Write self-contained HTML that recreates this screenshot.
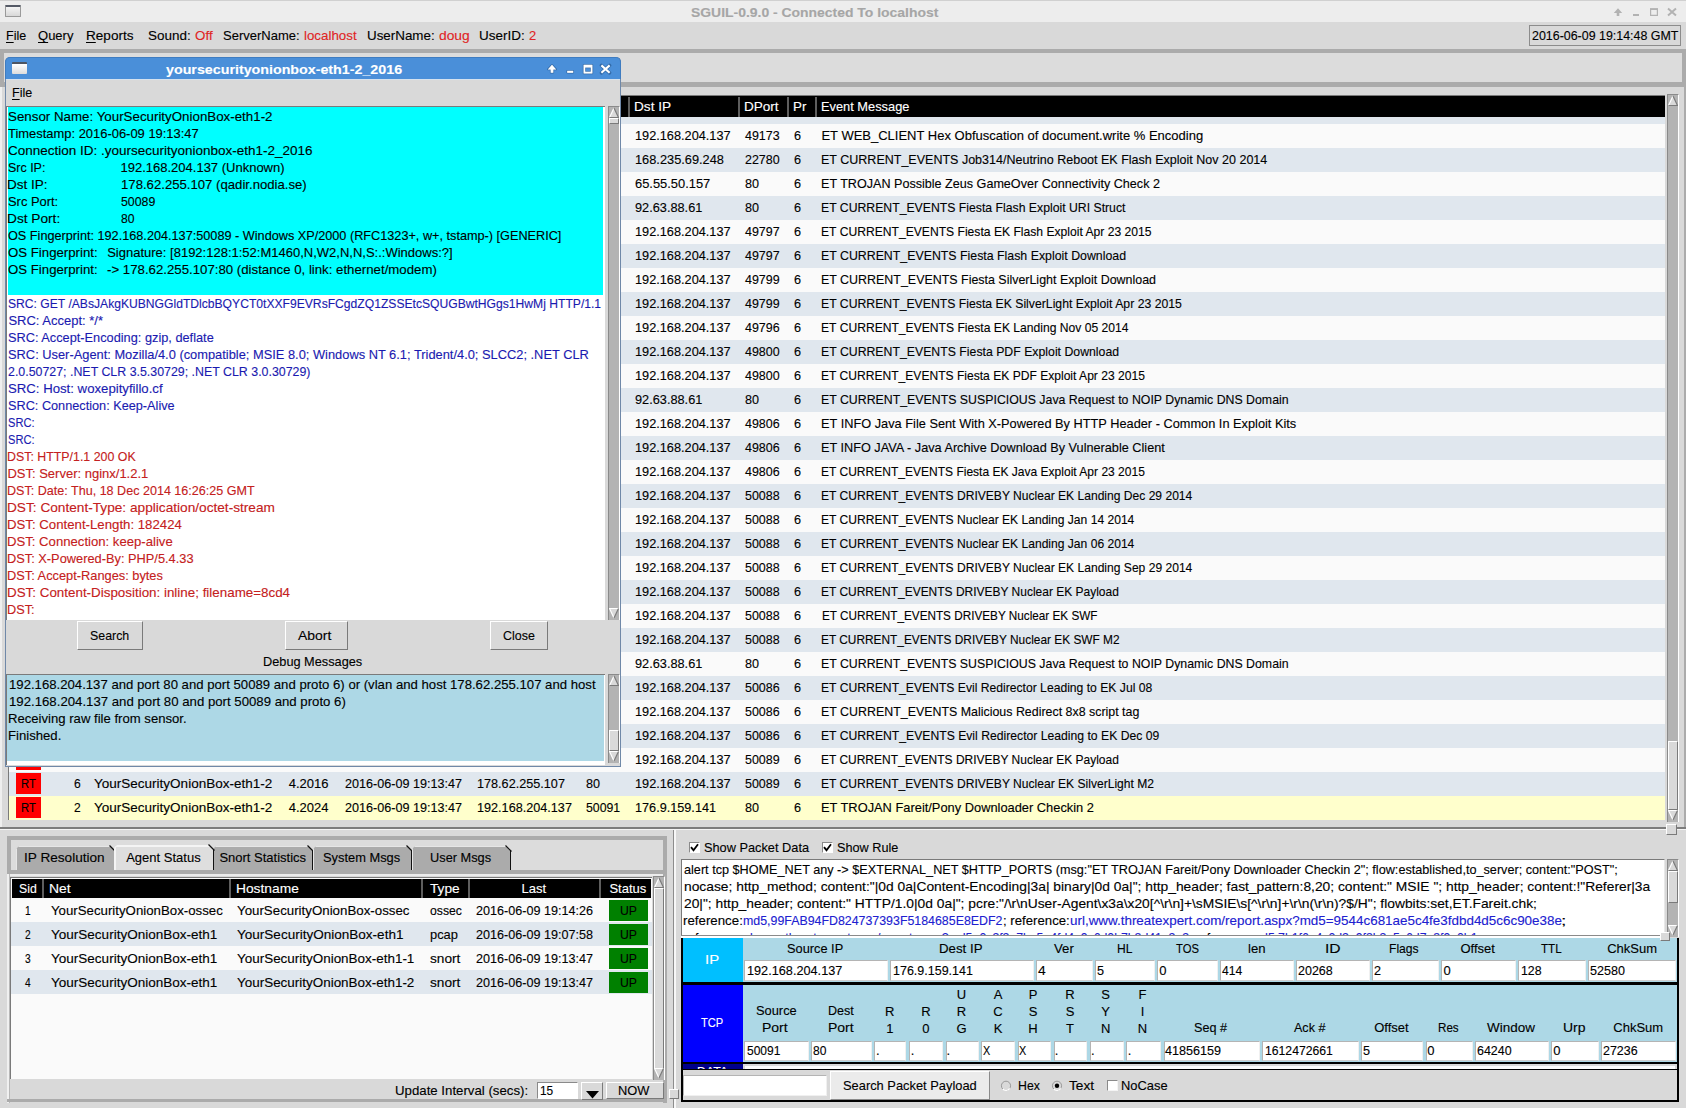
<!DOCTYPE html>
<html><head><meta charset="utf-8"><title>SGUIL-0.9.0 - Connected To localhost</title>
<style>
html,body{margin:0;padding:0;background:#d9d9d9;}
body{width:1686px;height:1108px;overflow:hidden;position:relative;background:#d9d9d9;font-family:"Liberation Sans",sans-serif;font-size:13px;}
div{position:absolute;box-sizing:border-box;}
.t{white-space:pre;transform-origin:0 0;-webkit-text-stroke:0.12px currentColor;}
u{text-decoration:underline;text-underline-offset:2px;}
svg{position:absolute;}
</style></head><body>
<div style="left:0px;top:0px;width:1686px;height:22px;background:#ededed;"></div><div style="left:0px;top:0px;width:1686px;height:1px;background:#d0d0d0;"></div><div style="left:5px;top:5px;width:16px;height:12px;background:linear-gradient(#f4f4f4,#d8d8d8);border:1px solid #9a9a9a;border-top:2px solid #555a66;border-radius:1px;"></div><div class="t" style="left:691.00px;top:4px;line-height:17px;font-size:13px;color:#a6a6a6;font-weight:bold;transform:scaleX(1.0710);">SGUIL-0.9.0 - Connected To localhost</div><svg style="left:1610px;top:4px" width="76" height="16" viewBox="0 0 76 16"><path d="M3.8 9L8 4.2L12.2 9H9.3V12H6.7V9Z" fill="#b2b2b2"/><rect x="23" y="10" width="6" height="2" fill="#b2b2b2"/><path d="M40.6 5H47.4V11.4H40.6Z" fill="none" stroke="#b2b2b2" stroke-width="1.2"/><rect x="40" y="4.2" width="8" height="1.8" fill="#b2b2b2"/><path d="M58 4.6L66 11.6M66 4.6L58 11.6" stroke="#b2b2b2" stroke-width="2"/></svg><div style="left:0px;top:22px;width:1686px;height:27px;background:#d9d9d9;"></div><div class="t" style="left:6.04px;top:27px;line-height:17px;font-size:13px;color:#000;transform:scaleX(0.9636);"><u>F</u>ile</div><div class="t" style="left:38.00px;top:27px;line-height:17px;font-size:13px;color:#000;"><u>Q</u>uery</div><div class="t" style="left:85.96px;top:27px;line-height:17px;font-size:13px;color:#000;transform:scaleX(1.0440);"><u>R</u>eports</div><div class="t" style="left:148.00px;top:27px;line-height:17px;font-size:13px;color:#000;transform:scaleX(1.0347);">Sound:</div><div class="t" style="left:195.00px;top:27px;line-height:17px;font-size:13px;color:#e02424;transform:scaleX(1.0292);">Off</div><div class="t" style="left:223.00px;top:27px;line-height:17px;font-size:13px;color:#000;">ServerName:</div><div class="t" style="left:304.00px;top:27px;line-height:17px;font-size:13px;color:#e02424;transform:scaleX(1.0252);">localhost</div><div class="t" style="left:366.97px;top:27px;line-height:17px;font-size:13px;color:#000;transform:scaleX(1.0292);">UserName:</div><div class="t" style="left:439.00px;top:27px;line-height:17px;font-size:13px;color:#e02424;transform:scaleX(1.0631);">doug</div><div class="t" style="left:478.96px;top:27px;line-height:17px;font-size:13px;color:#000;transform:scaleX(1.0366);">UserID:</div><div class="t" style="left:529.00px;top:27px;line-height:17px;font-size:13px;color:#e02424;">2</div><div style="left:1529px;top:25px;width:152px;height:21px;background:#d9d9d9;border:1px solid #8c8c8c;border-top-color:#8c8c8c;"></div><div class="t" style="left:1531.50px;top:27px;line-height:17px;font-size:13px;color:#000;transform:scaleX(0.9559);">2016-06-09 19:14:48 GMT</div><div style="left:0px;top:49px;width:1686px;height:4px;background:#ababab;"></div><div style="left:0px;top:49px;width:4px;height:38px;background:#ababab;"></div><div style="left:4px;top:53px;width:1678px;height:29px;background:#dcdcdc;"></div><div style="left:1682px;top:53px;width:4px;height:34px;background:#ababab;"></div><div style="left:0px;top:82px;width:1686px;height:5px;background:#ababab;"></div><div style="left:0px;top:87px;width:1686px;height:741px;background:#d9d9d9;"></div><div style="left:0px;top:87px;width:2px;height:741px;background:#efefef;"></div><div style="left:1684px;top:87px;width:2px;height:741px;background:#ababab;"></div><div style="left:8px;top:95px;width:1657px;height:725px;background:#7a7a7a;"></div><div style="left:9px;top:96px;width:1656px;height:724px;background:#fafafa;"></div><div style="left:9px;top:117px;width:1656px;height:7px;background:#e0e7ee;"></div><div style="left:9px;top:124px;width:1656px;height:24px;background:#fafafa;"></div><div style="left:9px;top:148px;width:1656px;height:24px;background:#e0e7ee;"></div><div style="left:9px;top:172px;width:1656px;height:24px;background:#fafafa;"></div><div style="left:9px;top:196px;width:1656px;height:24px;background:#e0e7ee;"></div><div style="left:9px;top:220px;width:1656px;height:24px;background:#fafafa;"></div><div style="left:9px;top:244px;width:1656px;height:24px;background:#e0e7ee;"></div><div style="left:9px;top:268px;width:1656px;height:24px;background:#fafafa;"></div><div style="left:9px;top:292px;width:1656px;height:24px;background:#e0e7ee;"></div><div style="left:9px;top:316px;width:1656px;height:24px;background:#fafafa;"></div><div style="left:9px;top:340px;width:1656px;height:24px;background:#e0e7ee;"></div><div style="left:9px;top:364px;width:1656px;height:24px;background:#fafafa;"></div><div style="left:9px;top:388px;width:1656px;height:24px;background:#e0e7ee;"></div><div style="left:9px;top:412px;width:1656px;height:24px;background:#fafafa;"></div><div style="left:9px;top:436px;width:1656px;height:24px;background:#e0e7ee;"></div><div style="left:9px;top:460px;width:1656px;height:24px;background:#fafafa;"></div><div style="left:9px;top:484px;width:1656px;height:24px;background:#e0e7ee;"></div><div style="left:9px;top:508px;width:1656px;height:24px;background:#fafafa;"></div><div style="left:9px;top:532px;width:1656px;height:24px;background:#e0e7ee;"></div><div style="left:9px;top:556px;width:1656px;height:24px;background:#fafafa;"></div><div style="left:9px;top:580px;width:1656px;height:24px;background:#e0e7ee;"></div><div style="left:9px;top:604px;width:1656px;height:24px;background:#fafafa;"></div><div style="left:9px;top:628px;width:1656px;height:24px;background:#e0e7ee;"></div><div style="left:9px;top:652px;width:1656px;height:24px;background:#fafafa;"></div><div style="left:9px;top:676px;width:1656px;height:24px;background:#e0e7ee;"></div><div style="left:9px;top:700px;width:1656px;height:24px;background:#fafafa;"></div><div style="left:9px;top:724px;width:1656px;height:24px;background:#e0e7ee;"></div><div style="left:9px;top:748px;width:1656px;height:24px;background:#fafafa;"></div><div style="left:9px;top:772px;width:1656px;height:24px;background:#e0e7ee;"></div><div style="left:9px;top:796px;width:1656px;height:24px;background:#ffffcc;"></div><div style="left:9px;top:96px;width:1656px;height:21px;background:#000;"></div><div style="left:628px;top:97px;width:2px;height:20px;background:#5e5e5e;"></div><div style="left:738px;top:97px;width:2px;height:20px;background:#5e5e5e;"></div><div style="left:787px;top:97px;width:2px;height:20px;background:#5e5e5e;"></div><div style="left:815px;top:97px;width:2px;height:20px;background:#5e5e5e;"></div><div class="t" style="left:634.25px;top:98px;line-height:17px;font-size:13px;color:#fff;transform:scaleX(1.0467);">Dst IP</div><div class="t" style="left:744.46px;top:98px;line-height:17px;font-size:13px;color:#fff;transform:scaleX(1.0424);">DPort</div><div class="t" style="left:793.47px;top:98px;line-height:17px;font-size:13px;color:#fff;transform:scaleX(1.0260);">Pr</div><div class="t" style="left:821.31px;top:98px;line-height:17px;font-size:13px;color:#fff;transform:scaleX(0.9867);">Event Message</div><div class="t" style="left:635.10px;top:127px;line-height:17px;font-size:13px;color:#000;transform:scaleX(0.9798);">192.168.204.137</div><div class="t" style="left:745.30px;top:127px;line-height:17px;font-size:13px;color:#000;transform:scaleX(0.9577);">49173</div><div class="t" style="left:794.40px;top:127px;line-height:17px;font-size:13px;color:#000;transform:scaleX(0.9714);">6</div><div class="t" style="left:821.40px;top:127px;line-height:17px;font-size:13px;color:#000;">ET WEB_CLIENT Hex Obfuscation of document.write % Encoding</div><div class="t" style="left:635.10px;top:151px;line-height:17px;font-size:13px;color:#000;transform:scaleX(0.9841);">168.235.69.248</div><div class="t" style="left:745.30px;top:151px;line-height:17px;font-size:13px;color:#000;transform:scaleX(0.9577);">22780</div><div class="t" style="left:794.40px;top:151px;line-height:17px;font-size:13px;color:#000;transform:scaleX(0.9714);">6</div><div class="t" style="left:821.44px;top:151px;line-height:17px;font-size:13px;color:#000;transform:scaleX(0.9625);">ET CURRENT_EVENTS Job314/Neutrino Reboot EK Flash Exploit Nov 20 2014</div><div class="t" style="left:635.10px;top:175px;line-height:17px;font-size:13px;color:#000;transform:scaleX(0.9911);">65.55.50.157</div><div class="t" style="left:745.30px;top:175px;line-height:17px;font-size:13px;color:#000;transform:scaleX(0.9698);">80</div><div class="t" style="left:794.40px;top:175px;line-height:17px;font-size:13px;color:#000;transform:scaleX(0.9714);">6</div><div class="t" style="left:821.43px;top:175px;line-height:17px;font-size:13px;color:#000;transform:scaleX(0.9686);">ET TROJAN Possible Zeus GameOver Connectivity Check 2</div><div class="t" style="left:635.10px;top:199px;line-height:17px;font-size:13px;color:#000;transform:scaleX(0.9803);">92.63.88.61</div><div class="t" style="left:745.30px;top:199px;line-height:17px;font-size:13px;color:#000;transform:scaleX(0.9698);">80</div><div class="t" style="left:794.40px;top:199px;line-height:17px;font-size:13px;color:#000;transform:scaleX(0.9714);">6</div><div class="t" style="left:821.46px;top:199px;line-height:17px;font-size:13px;color:#000;transform:scaleX(0.9414);">ET CURRENT_EVENTS Fiesta Flash Exploit URI Struct</div><div class="t" style="left:635.10px;top:223px;line-height:17px;font-size:13px;color:#000;transform:scaleX(0.9798);">192.168.204.137</div><div class="t" style="left:745.30px;top:223px;line-height:17px;font-size:13px;color:#000;transform:scaleX(0.9577);">49797</div><div class="t" style="left:794.40px;top:223px;line-height:17px;font-size:13px;color:#000;transform:scaleX(0.9714);">6</div><div class="t" style="left:821.47px;top:223px;line-height:17px;font-size:13px;color:#000;transform:scaleX(0.9324);">ET CURRENT_EVENTS Fiesta EK Flash Exploit Apr 23 2015</div><div class="t" style="left:635.10px;top:247px;line-height:17px;font-size:13px;color:#000;transform:scaleX(0.9798);">192.168.204.137</div><div class="t" style="left:745.30px;top:247px;line-height:17px;font-size:13px;color:#000;transform:scaleX(0.9577);">49797</div><div class="t" style="left:794.40px;top:247px;line-height:17px;font-size:13px;color:#000;transform:scaleX(0.9714);">6</div><div class="t" style="left:821.45px;top:247px;line-height:17px;font-size:13px;color:#000;transform:scaleX(0.9495);">ET CURRENT_EVENTS Fiesta Flash Exploit Download</div><div class="t" style="left:635.10px;top:271px;line-height:17px;font-size:13px;color:#000;transform:scaleX(0.9798);">192.168.204.137</div><div class="t" style="left:745.30px;top:271px;line-height:17px;font-size:13px;color:#000;transform:scaleX(0.9577);">49799</div><div class="t" style="left:794.40px;top:271px;line-height:17px;font-size:13px;color:#000;transform:scaleX(0.9714);">6</div><div class="t" style="left:821.44px;top:271px;line-height:17px;font-size:13px;color:#000;transform:scaleX(0.9566);">ET CURRENT_EVENTS Fiesta SilverLight Exploit Download</div><div class="t" style="left:635.10px;top:295px;line-height:17px;font-size:13px;color:#000;transform:scaleX(0.9798);">192.168.204.137</div><div class="t" style="left:745.30px;top:295px;line-height:17px;font-size:13px;color:#000;transform:scaleX(0.9577);">49799</div><div class="t" style="left:794.40px;top:295px;line-height:17px;font-size:13px;color:#000;transform:scaleX(0.9714);">6</div><div class="t" style="left:821.46px;top:295px;line-height:17px;font-size:13px;color:#000;transform:scaleX(0.9412);">ET CURRENT_EVENTS Fiesta EK SilverLight Exploit Apr 23 2015</div><div class="t" style="left:635.10px;top:319px;line-height:17px;font-size:13px;color:#000;transform:scaleX(0.9798);">192.168.204.137</div><div class="t" style="left:745.30px;top:319px;line-height:17px;font-size:13px;color:#000;transform:scaleX(0.9577);">49796</div><div class="t" style="left:794.40px;top:319px;line-height:17px;font-size:13px;color:#000;transform:scaleX(0.9714);">6</div><div class="t" style="left:821.47px;top:319px;line-height:17px;font-size:13px;color:#000;transform:scaleX(0.9320);">ET CURRENT_EVENTS Fiesta EK Landing Nov 05 2014</div><div class="t" style="left:635.10px;top:343px;line-height:17px;font-size:13px;color:#000;transform:scaleX(0.9798);">192.168.204.137</div><div class="t" style="left:745.30px;top:343px;line-height:17px;font-size:13px;color:#000;transform:scaleX(0.9577);">49800</div><div class="t" style="left:794.40px;top:343px;line-height:17px;font-size:13px;color:#000;transform:scaleX(0.9714);">6</div><div class="t" style="left:821.46px;top:343px;line-height:17px;font-size:13px;color:#000;transform:scaleX(0.9448);">ET CURRENT_EVENTS Fiesta PDF Exploit Download</div><div class="t" style="left:635.10px;top:367px;line-height:17px;font-size:13px;color:#000;transform:scaleX(0.9798);">192.168.204.137</div><div class="t" style="left:745.30px;top:367px;line-height:17px;font-size:13px;color:#000;transform:scaleX(0.9577);">49800</div><div class="t" style="left:794.40px;top:367px;line-height:17px;font-size:13px;color:#000;transform:scaleX(0.9714);">6</div><div class="t" style="left:821.47px;top:367px;line-height:17px;font-size:13px;color:#000;transform:scaleX(0.9287);">ET CURRENT_EVENTS Fiesta EK PDF Exploit Apr 23 2015</div><div class="t" style="left:635.10px;top:391px;line-height:17px;font-size:13px;color:#000;transform:scaleX(0.9803);">92.63.88.61</div><div class="t" style="left:745.30px;top:391px;line-height:17px;font-size:13px;color:#000;transform:scaleX(0.9698);">80</div><div class="t" style="left:794.40px;top:391px;line-height:17px;font-size:13px;color:#000;transform:scaleX(0.9714);">6</div><div class="t" style="left:821.45px;top:391px;line-height:17px;font-size:13px;color:#000;transform:scaleX(0.9486);">ET CURRENT_EVENTS SUSPICIOUS Java Request to NOIP Dynamic DNS Domain</div><div class="t" style="left:635.10px;top:415px;line-height:17px;font-size:13px;color:#000;transform:scaleX(0.9798);">192.168.204.137</div><div class="t" style="left:745.30px;top:415px;line-height:17px;font-size:13px;color:#000;transform:scaleX(0.9577);">49806</div><div class="t" style="left:794.40px;top:415px;line-height:17px;font-size:13px;color:#000;transform:scaleX(0.9714);">6</div><div class="t" style="left:821.42px;top:415px;line-height:17px;font-size:13px;color:#000;transform:scaleX(0.9828);">ET INFO Java File Sent With X-Powered By HTTP Header - Common In Exploit Kits</div><div class="t" style="left:635.10px;top:439px;line-height:17px;font-size:13px;color:#000;transform:scaleX(0.9798);">192.168.204.137</div><div class="t" style="left:745.30px;top:439px;line-height:17px;font-size:13px;color:#000;transform:scaleX(0.9577);">49806</div><div class="t" style="left:794.40px;top:439px;line-height:17px;font-size:13px;color:#000;transform:scaleX(0.9714);">6</div><div class="t" style="left:821.42px;top:439px;line-height:17px;font-size:13px;color:#000;transform:scaleX(0.9763);">ET INFO JAVA - Java Archive Download By Vulnerable Client</div><div class="t" style="left:635.10px;top:463px;line-height:17px;font-size:13px;color:#000;transform:scaleX(0.9798);">192.168.204.137</div><div class="t" style="left:745.30px;top:463px;line-height:17px;font-size:13px;color:#000;transform:scaleX(0.9577);">49806</div><div class="t" style="left:794.40px;top:463px;line-height:17px;font-size:13px;color:#000;transform:scaleX(0.9714);">6</div><div class="t" style="left:821.48px;top:463px;line-height:17px;font-size:13px;color:#000;transform:scaleX(0.9248);">ET CURRENT_EVENTS Fiesta EK Java Exploit Apr 23 2015</div><div class="t" style="left:635.10px;top:487px;line-height:17px;font-size:13px;color:#000;transform:scaleX(0.9798);">192.168.204.137</div><div class="t" style="left:745.30px;top:487px;line-height:17px;font-size:13px;color:#000;transform:scaleX(0.9577);">50088</div><div class="t" style="left:794.40px;top:487px;line-height:17px;font-size:13px;color:#000;transform:scaleX(0.9714);">6</div><div class="t" style="left:821.47px;top:487px;line-height:17px;font-size:13px;color:#000;transform:scaleX(0.9287);">ET CURRENT_EVENTS DRIVEBY Nuclear EK Landing Dec 29 2014</div><div class="t" style="left:635.10px;top:511px;line-height:17px;font-size:13px;color:#000;transform:scaleX(0.9798);">192.168.204.137</div><div class="t" style="left:745.30px;top:511px;line-height:17px;font-size:13px;color:#000;transform:scaleX(0.9577);">50088</div><div class="t" style="left:794.40px;top:511px;line-height:17px;font-size:13px;color:#000;transform:scaleX(0.9714);">6</div><div class="t" style="left:821.47px;top:511px;line-height:17px;font-size:13px;color:#000;transform:scaleX(0.9292);">ET CURRENT_EVENTS Nuclear EK Landing Jan 14 2014</div><div class="t" style="left:635.10px;top:535px;line-height:17px;font-size:13px;color:#000;transform:scaleX(0.9798);">192.168.204.137</div><div class="t" style="left:745.30px;top:535px;line-height:17px;font-size:13px;color:#000;transform:scaleX(0.9577);">50088</div><div class="t" style="left:794.40px;top:535px;line-height:17px;font-size:13px;color:#000;transform:scaleX(0.9714);">6</div><div class="t" style="left:821.47px;top:535px;line-height:17px;font-size:13px;color:#000;transform:scaleX(0.9292);">ET CURRENT_EVENTS Nuclear EK Landing Jan 06 2014</div><div class="t" style="left:635.10px;top:559px;line-height:17px;font-size:13px;color:#000;transform:scaleX(0.9798);">192.168.204.137</div><div class="t" style="left:745.30px;top:559px;line-height:17px;font-size:13px;color:#000;transform:scaleX(0.9577);">50088</div><div class="t" style="left:794.40px;top:559px;line-height:17px;font-size:13px;color:#000;transform:scaleX(0.9714);">6</div><div class="t" style="left:821.47px;top:559px;line-height:17px;font-size:13px;color:#000;transform:scaleX(0.9287);">ET CURRENT_EVENTS DRIVEBY Nuclear EK Landing Sep 29 2014</div><div class="t" style="left:635.10px;top:583px;line-height:17px;font-size:13px;color:#000;transform:scaleX(0.9798);">192.168.204.137</div><div class="t" style="left:745.30px;top:583px;line-height:17px;font-size:13px;color:#000;transform:scaleX(0.9577);">50088</div><div class="t" style="left:794.40px;top:583px;line-height:17px;font-size:13px;color:#000;transform:scaleX(0.9714);">6</div><div class="t" style="left:821.48px;top:583px;line-height:17px;font-size:13px;color:#000;transform:scaleX(0.9215);">ET CURRENT_EVENTS DRIVEBY Nuclear EK Payload</div><div class="t" style="left:635.10px;top:607px;line-height:17px;font-size:13px;color:#000;transform:scaleX(0.9798);">192.168.204.137</div><div class="t" style="left:745.30px;top:607px;line-height:17px;font-size:13px;color:#000;transform:scaleX(0.9577);">50088</div><div class="t" style="left:794.40px;top:607px;line-height:17px;font-size:13px;color:#000;transform:scaleX(0.9714);">6</div><div class="t" style="left:821.50px;top:607px;line-height:17px;font-size:13px;color:#000;transform:scaleX(0.9031);">ET CURRENT_EVENTS DRIVEBY Nuclear EK SWF</div><div class="t" style="left:635.10px;top:631px;line-height:17px;font-size:13px;color:#000;transform:scaleX(0.9798);">192.168.204.137</div><div class="t" style="left:745.30px;top:631px;line-height:17px;font-size:13px;color:#000;transform:scaleX(0.9577);">50088</div><div class="t" style="left:794.40px;top:631px;line-height:17px;font-size:13px;color:#000;transform:scaleX(0.9714);">6</div><div class="t" style="left:821.49px;top:631px;line-height:17px;font-size:13px;color:#000;transform:scaleX(0.9138);">ET CURRENT_EVENTS DRIVEBY Nuclear EK SWF M2</div><div class="t" style="left:635.10px;top:655px;line-height:17px;font-size:13px;color:#000;transform:scaleX(0.9803);">92.63.88.61</div><div class="t" style="left:745.30px;top:655px;line-height:17px;font-size:13px;color:#000;transform:scaleX(0.9698);">80</div><div class="t" style="left:794.40px;top:655px;line-height:17px;font-size:13px;color:#000;transform:scaleX(0.9714);">6</div><div class="t" style="left:821.45px;top:655px;line-height:17px;font-size:13px;color:#000;transform:scaleX(0.9486);">ET CURRENT_EVENTS SUSPICIOUS Java Request to NOIP Dynamic DNS Domain</div><div class="t" style="left:635.10px;top:679px;line-height:17px;font-size:13px;color:#000;transform:scaleX(0.9798);">192.168.204.137</div><div class="t" style="left:745.30px;top:679px;line-height:17px;font-size:13px;color:#000;transform:scaleX(0.9577);">50086</div><div class="t" style="left:794.40px;top:679px;line-height:17px;font-size:13px;color:#000;transform:scaleX(0.9714);">6</div><div class="t" style="left:821.47px;top:679px;line-height:17px;font-size:13px;color:#000;transform:scaleX(0.9343);">ET CURRENT_EVENTS Evil Redirector Leading to EK Jul 08</div><div class="t" style="left:635.10px;top:703px;line-height:17px;font-size:13px;color:#000;transform:scaleX(0.9798);">192.168.204.137</div><div class="t" style="left:745.30px;top:703px;line-height:17px;font-size:13px;color:#000;transform:scaleX(0.9577);">50086</div><div class="t" style="left:794.40px;top:703px;line-height:17px;font-size:13px;color:#000;transform:scaleX(0.9714);">6</div><div class="t" style="left:821.45px;top:703px;line-height:17px;font-size:13px;color:#000;transform:scaleX(0.9545);">ET CURRENT_EVENTS Malicious Redirect 8x8 script tag</div><div class="t" style="left:635.10px;top:727px;line-height:17px;font-size:13px;color:#000;transform:scaleX(0.9798);">192.168.204.137</div><div class="t" style="left:745.30px;top:727px;line-height:17px;font-size:13px;color:#000;transform:scaleX(0.9577);">50086</div><div class="t" style="left:794.40px;top:727px;line-height:17px;font-size:13px;color:#000;transform:scaleX(0.9714);">6</div><div class="t" style="left:821.46px;top:727px;line-height:17px;font-size:13px;color:#000;transform:scaleX(0.9369);">ET CURRENT_EVENTS Evil Redirector Leading to EK Dec 09</div><div class="t" style="left:635.10px;top:751px;line-height:17px;font-size:13px;color:#000;transform:scaleX(0.9798);">192.168.204.137</div><div class="t" style="left:745.30px;top:751px;line-height:17px;font-size:13px;color:#000;transform:scaleX(0.9577);">50089</div><div class="t" style="left:794.40px;top:751px;line-height:17px;font-size:13px;color:#000;transform:scaleX(0.9714);">6</div><div class="t" style="left:821.48px;top:751px;line-height:17px;font-size:13px;color:#000;transform:scaleX(0.9215);">ET CURRENT_EVENTS DRIVEBY Nuclear EK Payload</div><div class="t" style="left:635.10px;top:775px;line-height:17px;font-size:13px;color:#000;transform:scaleX(0.9798);">192.168.204.137</div><div class="t" style="left:745.30px;top:775px;line-height:17px;font-size:13px;color:#000;transform:scaleX(0.9577);">50089</div><div class="t" style="left:794.40px;top:775px;line-height:17px;font-size:13px;color:#000;transform:scaleX(0.9714);">6</div><div class="t" style="left:821.47px;top:775px;line-height:17px;font-size:13px;color:#000;transform:scaleX(0.9287);">ET CURRENT_EVENTS DRIVEBY Nuclear EK SilverLight M2</div><div class="t" style="left:635.10px;top:799px;line-height:17px;font-size:13px;color:#000;transform:scaleX(0.9746);">176.9.159.141</div><div class="t" style="left:745.30px;top:799px;line-height:17px;font-size:13px;color:#000;transform:scaleX(0.9698);">80</div><div class="t" style="left:794.40px;top:799px;line-height:17px;font-size:13px;color:#000;transform:scaleX(0.9714);">6</div><div class="t" style="left:821.41px;top:799px;line-height:17px;font-size:13px;color:#000;transform:scaleX(0.9881);">ET TROJAN Fareit/Pony Downloader Checkin 2</div><div style="left:16px;top:749px;width:25px;height:21px;background:#ff0000;"></div><div class="t" style="left:20.53px;top:751px;line-height:17px;font-size:13px;color:#000;transform:scaleX(0.8667);">RT</div><div class="t" style="left:73.50px;top:751px;line-height:17px;font-size:13px;color:#000;transform:scaleX(0.9286);">6</div><div class="t" style="left:94.20px;top:751px;line-height:17px;font-size:13px;color:#000;transform:scaleX(1.0393);">YourSecurityOnionBox-eth1-2</div><div class="t" style="left:288.70px;top:751px;line-height:17px;font-size:13px;color:#000;">4.2016</div><div class="t" style="left:345.30px;top:751px;line-height:17px;font-size:13px;color:#000;transform:scaleX(0.9686);">2016-06-09 19:13:47</div><div class="t" style="left:477.00px;top:751px;line-height:17px;font-size:13px;color:#000;transform:scaleX(0.9730);">178.62.255.107</div><div class="t" style="left:586.00px;top:751px;line-height:17px;font-size:13px;color:#000;transform:scaleX(0.9698);">80</div><div style="left:16px;top:773px;width:25px;height:21px;background:#ff0000;"></div><div class="t" style="left:20.53px;top:775px;line-height:17px;font-size:13px;color:#000;transform:scaleX(0.8667);">RT</div><div class="t" style="left:73.50px;top:775px;line-height:17px;font-size:13px;color:#000;transform:scaleX(0.9286);">6</div><div class="t" style="left:94.20px;top:775px;line-height:17px;font-size:13px;color:#000;transform:scaleX(1.0393);">YourSecurityOnionBox-eth1-2</div><div class="t" style="left:288.70px;top:775px;line-height:17px;font-size:13px;color:#000;">4.2016</div><div class="t" style="left:345.30px;top:775px;line-height:17px;font-size:13px;color:#000;transform:scaleX(0.9686);">2016-06-09 19:13:47</div><div class="t" style="left:477.00px;top:775px;line-height:17px;font-size:13px;color:#000;transform:scaleX(0.9730);">178.62.255.107</div><div class="t" style="left:586.00px;top:775px;line-height:17px;font-size:13px;color:#000;transform:scaleX(0.9698);">80</div><div style="left:16px;top:797px;width:25px;height:21px;background:#ff0000;"></div><div class="t" style="left:20.53px;top:799px;line-height:17px;font-size:13px;color:#000;transform:scaleX(0.8667);">RT</div><div class="t" style="left:73.50px;top:799px;line-height:17px;font-size:13px;color:#000;transform:scaleX(0.9286);">2</div><div class="t" style="left:94.20px;top:799px;line-height:17px;font-size:13px;color:#000;transform:scaleX(1.0393);">YourSecurityOnionBox-eth1-2</div><div class="t" style="left:288.70px;top:799px;line-height:17px;font-size:13px;color:#000;">4.2024</div><div class="t" style="left:345.30px;top:799px;line-height:17px;font-size:13px;color:#000;transform:scaleX(0.9686);">2016-06-09 19:13:47</div><div class="t" style="left:477.00px;top:799px;line-height:17px;font-size:13px;color:#000;transform:scaleX(0.9726);">192.168.204.137</div><div class="t" style="left:586.00px;top:799px;line-height:17px;font-size:13px;color:#000;transform:scaleX(0.9465);">50091</div><div style="left:1667px;top:94px;width:12px;height:728px;background:#b3b3b3;border-left:1px solid #8a8a8a;border-top:1px solid #8a8a8a;border-right:1px solid #fff;"></div><div style="left:1668px;top:741px;width:10px;height:69px;background:#d9d9d9;border:1px solid;border-color:#fff #7a7a7a #7a7a7a #fff;"></div><svg style="left:1668px;top:95px" width="10" height="11"><path d="M0.5 10.5L5 1L9.5 10.5Z" fill="#d9d9d9"/><path d="M0.5 10.5L5 1" stroke="#fff" stroke-width="1.2" fill="none"/><path d="M5 1L9.5 10.5H0.5" stroke="#7a7a7a" stroke-width="1.2" fill="none"/></svg><svg style="left:1668px;top:810px" width="10" height="11"><path d="M0.5 0.5L5 10L9.5 0.5Z" fill="#d9d9d9"/><path d="M9.5 0.5H0.5L5 10" stroke="#fff" stroke-width="1.2" fill="none"/><path d="M5 10L9.5 0.5" stroke="#7a7a7a" stroke-width="1.2" fill="none"/></svg><div style="left:5px;top:57px;width:616px;height:710px;background:#d9d9d9;border:1px solid #6f88a8;border-top:none;border-radius:5px 5px 0 0;"></div><div style="left:5px;top:57px;width:616px;height:22px;background:#4a8fd9;border-radius:5px 5px 0 0;border:1px solid #3f7cc0;border-bottom:none;"></div><div style="left:6px;top:79px;width:614px;height:1px;background:#d6e2ee;"></div><div style="left:12px;top:62px;width:15px;height:12px;background:linear-gradient(#ffffff,#dcdcdc);border-top:2px solid #4d5563;border-radius:1px;"></div><div class="t" style="left:166.00px;top:61px;line-height:17px;font-size:13px;color:#fff;font-weight:bold;transform:scaleX(1.0965);">yoursecurityonionbox-eth1-2_2016</div><svg style="left:545px;top:62px" width="70" height="14" viewBox="0 0 70 14"><g stroke="#24558c" stroke-width="1.6" stroke-linejoin="round" fill="#fff" stroke-opacity="0.6"><path d="M2.8 7.4L7 2.8L11.2 7.4H8.3V10.8H5.7V7.4Z"/><rect x="22.2" y="8.8" width="6" height="2"/><path d="M38.6 2.8H47.4V11.4H38.6Z M40.2 5.4V9.8H45.8V5.4Z" fill-rule="evenodd"/><path d="M56.4 3.4L64.6 10.8M64.6 3.4L56.4 10.8" fill="none" stroke-width="3.6" stroke-linecap="round"/></g><g fill="#fff"><path d="M2.8 7.4L7 2.8L11.2 7.4H8.3V10.8H5.7V7.4Z"/><rect x="22.2" y="8.8" width="6" height="2"/><path d="M38.6 2.8H47.4V11.4H38.6Z M40.2 5.4V9.8H45.8V5.4Z" fill-rule="evenodd"/></g><path d="M56.4 3.4L64.6 10.8M64.6 3.4L56.4 10.8" stroke="#fff" stroke-width="2.1"/></svg><div class="t" style="left:11.64px;top:84px;line-height:17px;font-size:13px;color:#000;transform:scaleX(0.9636);"><u>F</u>ile</div><div style="left:6px;top:106px;width:599px;height:514px;background:#fff;border-top:1px solid #7a7a7a;border-left:1px solid #7a7a7a;"></div><div style="left:8px;top:107px;width:595px;height:188px;background:#00ffff;"></div><div class="t" style="left:8.40px;top:108px;line-height:17px;font-size:13px;color:#000;transform:scaleX(1.0253);">Sensor Name: YourSecurityOnionBox-eth1-2</div><div class="t" style="left:8.40px;top:125px;line-height:17px;font-size:13px;color:#000;transform:scaleX(0.9947);">Timestamp: 2016-06-09 19:13:47</div><div class="t" style="left:8.40px;top:142px;line-height:17px;font-size:13px;color:#000;transform:scaleX(1.0380);">Connection ID: .yoursecurityonionbox-eth1-2_2016</div><div class="t" style="left:8.40px;top:227px;line-height:17px;font-size:13px;color:#000;transform:scaleX(0.9756);">OS Fingerprint: 192.168.204.137:50089 - Windows XP/2000 (RFC1323+, w+, tstamp-) [GENERIC]</div><div class="t" style="left:8.40px;top:295px;line-height:17px;font-size:13px;color:#1a1ab0;transform:scaleX(0.9323);">SRC: GET /ABsJAkgKUBNGGldTDlcbBQYCT0tXXF9EVRsFCgdZQ1ZSSEtcSQUGBwtHGgs1HwMj HTTP/1.1</div><div class="t" style="left:8.40px;top:312px;line-height:17px;font-size:13px;color:#1a1ab0;">SRC: Accept: */*</div><div class="t" style="left:8.40px;top:329px;line-height:17px;font-size:13px;color:#1a1ab0;transform:scaleX(0.9817);">SRC: Accept-Encoding: gzip, deflate</div><div class="t" style="left:8.40px;top:346px;line-height:17px;font-size:13px;color:#1a1ab0;transform:scaleX(0.9885);">SRC: User-Agent: Mozilla/4.0 (compatible; MSIE 8.0; Windows NT 6.1; Trident/4.0; SLCC2; .NET CLR</div><div class="t" style="left:8.40px;top:363px;line-height:17px;font-size:13px;color:#1a1ab0;transform:scaleX(0.9527);">2.0.50727; .NET CLR 3.5.30729; .NET CLR 3.0.30729)</div><div class="t" style="left:8.40px;top:380px;line-height:17px;font-size:13px;color:#1a1ab0;transform:scaleX(1.0143);">SRC: Host: woxepityfillo.cf</div><div class="t" style="left:8.40px;top:397px;line-height:17px;font-size:13px;color:#1a1ab0;transform:scaleX(0.9771);">SRC: Connection: Keep-Alive</div><div class="t" style="left:8.40px;top:414px;line-height:17px;font-size:13px;color:#1a1ab0;transform:scaleX(0.8539);">SRC:</div><div class="t" style="left:8.40px;top:431px;line-height:17px;font-size:13px;color:#1a1ab0;transform:scaleX(0.8539);">SRC:</div><div class="t" style="left:7.45px;top:448px;line-height:17px;font-size:13px;color:#c42020;transform:scaleX(0.9521);">DST: HTTP/1.1 200 OK</div><div class="t" style="left:7.40px;top:465px;line-height:17px;font-size:13px;color:#c42020;">DST: Server: nginx/1.2.1</div><div class="t" style="left:7.43px;top:482px;line-height:17px;font-size:13px;color:#c42020;transform:scaleX(0.9664);">DST: Date: Thu, 18 Dec 2014 16:26:25 GMT</div><div class="t" style="left:7.35px;top:499px;line-height:17px;font-size:13px;color:#c42020;transform:scaleX(1.0504);">DST: Content-Type: application/octet-stream</div><div class="t" style="left:7.38px;top:516px;line-height:17px;font-size:13px;color:#c42020;transform:scaleX(1.0165);">DST: Content-Length: 182424</div><div class="t" style="left:7.39px;top:533px;line-height:17px;font-size:13px;color:#c42020;transform:scaleX(1.0104);">DST: Connection: keep-alive</div><div class="t" style="left:7.41px;top:550px;line-height:17px;font-size:13px;color:#c42020;transform:scaleX(0.9853);">DST: X-Powered-By: PHP/5.4.33</div><div class="t" style="left:7.41px;top:567px;line-height:17px;font-size:13px;color:#c42020;transform:scaleX(0.9851);">DST: Accept-Ranges: bytes</div><div class="t" style="left:7.37px;top:584px;line-height:17px;font-size:13px;color:#c42020;transform:scaleX(1.0295);">DST: Content-Disposition: inline; filename=8cd4</div><div class="t" style="left:7.42px;top:601px;line-height:17px;font-size:13px;color:#c42020;transform:scaleX(0.9789);">DST:</div><div class="t" style="left:8.40px;top:159px;line-height:17px;font-size:13px;color:#000;transform:scaleX(0.9585);">Src IP:</div><div class="t" style="left:120.50px;top:159px;line-height:17px;font-size:13px;color:#000;">192.168.204.137 (Unknown)</div><div class="t" style="left:7.36px;top:176px;line-height:17px;font-size:13px;color:#000;transform:scaleX(1.0376);">Dst IP:</div><div class="t" style="left:120.50px;top:176px;line-height:17px;font-size:13px;color:#000;transform:scaleX(1.0117);">178.62.255.107 (qadir.nodia.se)</div><div class="t" style="left:8.40px;top:193px;line-height:17px;font-size:13px;color:#000;transform:scaleX(0.9929);">Src Port:</div><div class="t" style="left:120.50px;top:193px;line-height:17px;font-size:13px;color:#000;transform:scaleX(0.9493);">50089</div><div class="t" style="left:7.35px;top:210px;line-height:17px;font-size:13px;color:#000;transform:scaleX(1.0520);">Dst Port:</div><div class="t" style="left:120.50px;top:210px;line-height:17px;font-size:13px;color:#000;transform:scaleX(0.9346);">80</div><div class="t" style="left:8.40px;top:244px;line-height:17px;font-size:13px;color:#000;transform:scaleX(1.0168);">OS Fingerprint:</div><div class="t" style="left:107.20px;top:244px;line-height:17px;font-size:13px;color:#000;">Signature: [8192:128:1:52:M1460,N,W2,N,N,S:.:Windows:?]</div><div class="t" style="left:8.40px;top:261px;line-height:17px;font-size:13px;color:#000;transform:scaleX(1.0168);">OS Fingerprint:</div><div class="t" style="left:107.20px;top:261px;line-height:17px;font-size:13px;color:#000;transform:scaleX(1.0176);">-&gt; 178.62.255.107:80 (distance 0, link: ethernet/modem)</div><div style="left:608px;top:106px;width:12px;height:514px;background:#b3b3b3;border-left:1px solid #8a8a8a;border-top:1px solid #8a8a8a;border-right:1px solid #fff;"></div><div style="left:609px;top:118px;width:10px;height:6px;background:#d9d9d9;border:1px solid;border-color:#fff #7a7a7a #7a7a7a #fff;"></div><svg style="left:609px;top:107px" width="10" height="11"><path d="M0.5 10.5L5 1L9.5 10.5Z" fill="#d9d9d9"/><path d="M0.5 10.5L5 1" stroke="#fff" stroke-width="1.2" fill="none"/><path d="M5 1L9.5 10.5H0.5" stroke="#7a7a7a" stroke-width="1.2" fill="none"/></svg><svg style="left:609px;top:608px" width="10" height="11"><path d="M0.5 0.5L5 10L9.5 0.5Z" fill="#d9d9d9"/><path d="M9.5 0.5H0.5L5 10" stroke="#fff" stroke-width="1.2" fill="none"/><path d="M5 10L9.5 0.5" stroke="#7a7a7a" stroke-width="1.2" fill="none"/></svg><div style="left:77px;top:621px;width:66px;height:29px;background:#d9d9d9;border:1px solid;border-color:#fff #7a7a7a #7a7a7a #fff;"></div><div class="t" style="left:90.30px;top:627px;line-height:17px;font-size:13px;color:#000;transform:scaleX(0.9521);">Search</div><div style="left:285px;top:621px;width:63px;height:29px;background:#d9d9d9;border:1px solid;border-color:#fff #7a7a7a #7a7a7a #fff;"></div><div class="t" style="left:297.80px;top:627px;line-height:17px;font-size:13px;color:#000;transform:scaleX(1.0712);">Abort</div><div style="left:490px;top:621px;width:58px;height:29px;background:#d9d9d9;border:1px solid;border-color:#fff #7a7a7a #7a7a7a #fff;"></div><div class="t" style="left:503.20px;top:627px;line-height:17px;font-size:13px;color:#000;transform:scaleX(0.9574);">Close</div><div class="t" style="left:262.52px;top:653px;line-height:17px;font-size:13px;color:#000;transform:scaleX(0.9804);">Debug Messages</div><div style="left:6px;top:674px;width:599px;height:91px;background:#fff;border-top:1px solid #7a7a7a;border-left:1px solid #7a7a7a;"></div><div style="left:7px;top:675px;width:597px;height:86px;background:#add8e6;"></div><div class="t" style="left:9.00px;top:676px;line-height:17px;font-size:13px;color:#000;transform:scaleX(1.0119);">192.168.204.137 and port 80 and port 50089 and proto 6) or (vlan and host 178.62.255.107 and host</div><div class="t" style="left:9.00px;top:693px;line-height:17px;font-size:13px;color:#000;transform:scaleX(1.0153);">192.168.204.137 and port 80 and port 50089 and proto 6)</div><div class="t" style="left:7.99px;top:710px;line-height:17px;font-size:13px;color:#000;transform:scaleX(1.0091);">Receiving raw file from sensor.</div><div class="t" style="left:7.99px;top:727px;line-height:17px;font-size:13px;color:#000;transform:scaleX(1.0110);">Finished.</div><div style="left:608px;top:674px;width:12px;height:89px;background:#b3b3b3;border-left:1px solid #8a8a8a;border-top:1px solid #8a8a8a;border-right:1px solid #fff;"></div><div style="left:609px;top:730px;width:10px;height:21px;background:#d9d9d9;border:1px solid;border-color:#fff #7a7a7a #7a7a7a #fff;"></div><svg style="left:609px;top:675px" width="10" height="11"><path d="M0.5 10.5L5 1L9.5 10.5Z" fill="#d9d9d9"/><path d="M0.5 10.5L5 1" stroke="#fff" stroke-width="1.2" fill="none"/><path d="M5 1L9.5 10.5H0.5" stroke="#7a7a7a" stroke-width="1.2" fill="none"/></svg><svg style="left:609px;top:751px" width="10" height="11"><path d="M0.5 0.5L5 10L9.5 0.5Z" fill="#d9d9d9"/><path d="M9.5 0.5H0.5L5 10" stroke="#fff" stroke-width="1.2" fill="none"/><path d="M5 10L9.5 0.5" stroke="#7a7a7a" stroke-width="1.2" fill="none"/></svg><div style="left:0px;top:827px;width:1686px;height:2px;background:#7d7d7d;"></div><div style="left:0px;top:829px;width:1686px;height:1px;background:#f4f4f4;"></div><div style="left:0px;top:830px;width:1686px;height:278px;background:#d9d9d9;"></div><div style="left:1666px;top:824px;width:11px;height:11px;background:#d9d9d9;border:1px solid;border-color:#fff #7a7a7a #7a7a7a #fff;"></div><div style="left:672.5px;top:830px;width:1.5px;height:278px;background:#8d8d8d;"></div><div style="left:674px;top:830px;width:2px;height:278px;background:#f7f7f7;"></div><div style="left:669px;top:1089px;width:10px;height:10px;background:#d9d9d9;border:1px solid;border-color:#fff #7a7a7a #7a7a7a #fff;"></div><div style="left:7px;top:836px;width:660px;height:38px;background:#ababab;"></div><div style="left:11px;top:840px;width:652px;height:30px;background:#dcdcdc;"></div><div style="left:16px;top:846px;width:99px;height:24px;background:#ababab;border-top:1px solid #e6e6e6;border-left:1px solid #e6e6e6;border-right:1px solid #111;clip-path:polygon(0 3px,3px 0,calc(100% - 5px) 0,100% 5px,100% 100%,0 100%);"></div><svg style="left:109px;top:845px" width="7" height="7"><path d="M0.5 0.5L6.5 6.5" stroke="#111" stroke-width="1.2"/></svg><div class="t" style="left:23.75px;top:849px;line-height:17px;font-size:13px;color:#000;transform:scaleX(1.0461);">IP Resolution</div><div style="left:213px;top:846px;width:100px;height:24px;background:#ababab;border-top:1px solid #e6e6e6;border-left:1px solid #e6e6e6;border-right:1px solid #111;clip-path:polygon(0 3px,3px 0,calc(100% - 5px) 0,100% 5px,100% 100%,0 100%);"></div><svg style="left:307px;top:845px" width="7" height="7"><path d="M0.5 0.5L6.5 6.5" stroke="#111" stroke-width="1.2"/></svg><div class="t" style="left:219.40px;top:849px;line-height:17px;font-size:13px;color:#000;">Snort Statistics</div><div style="left:313px;top:846px;width:99px;height:24px;background:#ababab;border-top:1px solid #e6e6e6;border-left:1px solid #e6e6e6;border-right:1px solid #111;clip-path:polygon(0 3px,3px 0,calc(100% - 5px) 0,100% 5px,100% 100%,0 100%);"></div><svg style="left:406px;top:845px" width="7" height="7"><path d="M0.5 0.5L6.5 6.5" stroke="#111" stroke-width="1.2"/></svg><div class="t" style="left:323.00px;top:849px;line-height:17px;font-size:13px;color:#000;transform:scaleX(0.9896);">System Msgs</div><div style="left:412px;top:846px;width:99px;height:24px;background:#ababab;border-top:1px solid #e6e6e6;border-left:1px solid #e6e6e6;border-right:1px solid #111;clip-path:polygon(0 3px,3px 0,calc(100% - 5px) 0,100% 5px,100% 100%,0 100%);"></div><svg style="left:505px;top:845px" width="7" height="7"><path d="M0.5 0.5L6.5 6.5" stroke="#111" stroke-width="1.2"/></svg><div class="t" style="left:430.22px;top:849px;line-height:17px;font-size:13px;color:#000;transform:scaleX(0.9835);">User Msgs</div><div style="left:114px;top:845px;width:100px;height:25px;background:#dedede;border-top:2px solid #f4f4f4;border-left:2px solid #f4f4f4;border-right:1px solid #111;clip-path:polygon(0 3px,3px 0,calc(100% - 5px) 0,100% 5px,100% 100%,0 100%);"></div><svg style="left:208px;top:844px" width="7" height="7"><path d="M0.5 0.5L6.5 6.5" stroke="#111" stroke-width="1.2"/></svg><div class="t" style="left:126.20px;top:849px;line-height:17px;font-size:13px;color:#000;">Agent Status</div><div style="left:7px;top:874px;width:2px;height:229px;background:#f0f0f0;"></div><div style="left:9px;top:874px;width:1px;height:229px;background:#b8b8b8;"></div><div style="left:10px;top:874px;width:657px;height:2px;background:#ececec;"></div><div style="left:663px;top:874px;width:4px;height:229px;background:#ababab;"></div><div style="left:7px;top:1099px;width:660px;height:3px;background:#ababab;"></div><div style="left:10px;top:877px;width:642px;height:202px;background:#7a7a7a;"></div><div style="left:11px;top:878px;width:641px;height:201px;background:#fafafa;"></div><div style="left:12px;top:879px;width:639px;height:19px;background:#000;"></div><div style="left:42px;top:879px;width:2px;height:19px;background:#5e5e5e;"></div><div style="left:229px;top:879px;width:2px;height:19px;background:#5e5e5e;"></div><div style="left:421px;top:879px;width:2px;height:19px;background:#5e5e5e;"></div><div style="left:468px;top:879px;width:2px;height:19px;background:#5e5e5e;"></div><div style="left:599px;top:879px;width:2px;height:19px;background:#5e5e5e;"></div><div class="t" style="left:18.50px;top:880px;line-height:17px;font-size:13px;color:#fff;transform:scaleX(0.9429);">Sid</div><div class="t" style="left:49.43px;top:880px;line-height:17px;font-size:13px;color:#fff;transform:scaleX(1.0704);">Net</div><div class="t" style="left:235.94px;top:880px;line-height:17px;font-size:13px;color:#fff;transform:scaleX(1.0600);">Hostname</div><div class="t" style="left:429.60px;top:880px;line-height:17px;font-size:13px;color:#fff;transform:scaleX(1.0553);">Type</div><div class="t" style="left:521.50px;top:880px;line-height:17px;font-size:13px;color:#fff;">Last</div><div class="t" style="left:609.40px;top:880px;line-height:17px;font-size:13px;color:#fff;">Status</div><div class="t" style="left:24.90px;top:902px;line-height:17px;font-size:13px;color:#000;transform:scaleX(0.7857);">1</div><div class="t" style="left:50.50px;top:902px;line-height:17px;font-size:13px;color:#000;transform:scaleX(1.0189);">YourSecurityOnionBox-ossec</div><div class="t" style="left:237.20px;top:902px;line-height:17px;font-size:13px;color:#000;transform:scaleX(1.0230);">YourSecurityOnionBox-ossec</div><div class="t" style="left:429.60px;top:902px;line-height:17px;font-size:13px;color:#000;transform:scaleX(0.9402);">ossec</div><div class="t" style="left:476.30px;top:902px;line-height:17px;font-size:13px;color:#000;transform:scaleX(0.9686);">2016-06-09 19:14:26</div><div style="left:609px;top:900px;width:39px;height:21px;background:#008000;"></div><div class="t" style="left:619.56px;top:902px;line-height:17px;font-size:13px;color:#000;transform:scaleX(0.9397);">UP</div><div style="left:11px;top:922px;width:641px;height:24px;background:#e0e7ee;"></div><div class="t" style="left:24.90px;top:926px;line-height:17px;font-size:13px;color:#000;transform:scaleX(0.7857);">2</div><div class="t" style="left:50.50px;top:926px;line-height:17px;font-size:13px;color:#000;transform:scaleX(1.0400);">YourSecurityOnionBox-eth1</div><div class="t" style="left:237.20px;top:926px;line-height:17px;font-size:13px;color:#000;transform:scaleX(1.0406);">YourSecurityOnionBox-eth1</div><div class="t" style="left:429.60px;top:926px;line-height:17px;font-size:13px;color:#000;transform:scaleX(0.9907);">pcap</div><div class="t" style="left:476.30px;top:926px;line-height:17px;font-size:13px;color:#000;transform:scaleX(0.9686);">2016-06-09 19:07:58</div><div style="left:609px;top:924px;width:39px;height:21px;background:#008000;"></div><div class="t" style="left:619.56px;top:926px;line-height:17px;font-size:13px;color:#000;transform:scaleX(0.9397);">UP</div><div class="t" style="left:24.90px;top:950px;line-height:17px;font-size:13px;color:#000;transform:scaleX(0.7857);">3</div><div class="t" style="left:50.50px;top:950px;line-height:17px;font-size:13px;color:#000;transform:scaleX(1.0400);">YourSecurityOnionBox-eth1</div><div class="t" style="left:237.20px;top:950px;line-height:17px;font-size:13px;color:#000;transform:scaleX(1.0340);">YourSecurityOnionBox-eth1-1</div><div class="t" style="left:429.60px;top:950px;line-height:17px;font-size:13px;color:#000;transform:scaleX(1.0516);">snort</div><div class="t" style="left:476.30px;top:950px;line-height:17px;font-size:13px;color:#000;transform:scaleX(0.9686);">2016-06-09 19:13:47</div><div style="left:609px;top:948px;width:39px;height:21px;background:#008000;"></div><div class="t" style="left:619.56px;top:950px;line-height:17px;font-size:13px;color:#000;transform:scaleX(0.9397);">UP</div><div style="left:11px;top:970px;width:641px;height:24px;background:#e0e7ee;"></div><div class="t" style="left:24.90px;top:974px;line-height:17px;font-size:13px;color:#000;transform:scaleX(0.7857);">4</div><div class="t" style="left:50.50px;top:974px;line-height:17px;font-size:13px;color:#000;transform:scaleX(1.0400);">YourSecurityOnionBox-eth1</div><div class="t" style="left:237.20px;top:974px;line-height:17px;font-size:13px;color:#000;transform:scaleX(1.0340);">YourSecurityOnionBox-eth1-2</div><div class="t" style="left:429.60px;top:974px;line-height:17px;font-size:13px;color:#000;transform:scaleX(1.0516);">snort</div><div class="t" style="left:476.30px;top:974px;line-height:17px;font-size:13px;color:#000;transform:scaleX(0.9686);">2016-06-09 19:13:47</div><div style="left:609px;top:972px;width:39px;height:21px;background:#008000;"></div><div class="t" style="left:619.56px;top:974px;line-height:17px;font-size:13px;color:#000;transform:scaleX(0.9397);">UP</div><div style="left:653px;top:876px;width:12px;height:204px;background:#b3b3b3;border-left:1px solid #8a8a8a;border-top:1px solid #8a8a8a;border-right:1px solid #fff;"></div><div style="left:654px;top:888px;width:10px;height:181px;background:#d9d9d9;border:1px solid;border-color:#fff #7a7a7a #7a7a7a #fff;"></div><svg style="left:654px;top:877px" width="10" height="11"><path d="M0.5 10.5L5 1L9.5 10.5Z" fill="#d9d9d9"/><path d="M0.5 10.5L5 1" stroke="#fff" stroke-width="1.2" fill="none"/><path d="M5 1L9.5 10.5H0.5" stroke="#7a7a7a" stroke-width="1.2" fill="none"/></svg><svg style="left:654px;top:1068px" width="10" height="11"><path d="M0.5 0.5L5 10L9.5 0.5Z" fill="#d9d9d9"/><path d="M9.5 0.5H0.5L5 10" stroke="#fff" stroke-width="1.2" fill="none"/><path d="M5 10L9.5 0.5" stroke="#7a7a7a" stroke-width="1.2" fill="none"/></svg><div class="t" style="left:395.48px;top:1082px;line-height:17px;font-size:13px;color:#000;transform:scaleX(1.0181);">Update Interval (secs):</div><div style="left:537px;top:1082px;width:41px;height:17px;background:#fff;border:1px solid;border-color:#8a8a8a #fff #fff #8a8a8a;"></div><div class="t" style="left:540.30px;top:1082px;line-height:17px;font-size:13px;color:#000;transform:scaleX(0.9136);">15</div><div style="left:581px;top:1082px;width:22px;height:18px;background:#d9d9d9;border:1px solid;border-color:#fff #7a7a7a #7a7a7a #fff;"></div><svg style="left:585.5px;top:1091px" width="14" height="8"><path d="M0 0H13L6.5 7.5Z" fill="#000"/></svg><div style="left:606px;top:1082px;width:58px;height:17px;background:#d9d9d9;border:1px solid;border-color:#fff #7a7a7a #7a7a7a #fff;"></div><div class="t" style="left:618.01px;top:1082px;line-height:17px;font-size:13px;color:#000;transform:scaleX(0.9905);">NOW</div><div style="left:689px;top:842px;width:11px;height:11px;background:#fff;border:1px solid;border-color:#8a8a8a #fff #fff #8a8a8a;"></div><svg style="left:689px;top:842px" width="11" height="11"><path d="M2 5.2L4.5 8.2L9 2.2" fill="none" stroke="#000" stroke-width="1.8"/></svg><div class="t" style="left:704.40px;top:839px;line-height:17px;font-size:13px;color:#000;transform:scaleX(0.9822);">Show Packet Data</div><div style="left:822px;top:842px;width:11px;height:11px;background:#fff;border:1px solid;border-color:#8a8a8a #fff #fff #8a8a8a;"></div><svg style="left:822px;top:842px" width="11" height="11"><path d="M2 5.2L4.5 8.2L9 2.2" fill="none" stroke="#000" stroke-width="1.8"/></svg><div class="t" style="left:837.30px;top:839px;line-height:17px;font-size:13px;color:#000;transform:scaleX(0.9755);">Show Rule</div><div style="left:681px;top:859px;width:984px;height:78px;background:#fff;border:1px solid;border-color:#7a7a7a #e8e8e8 #7a7a7a #7a7a7a;overflow:hidden;"></div><div class="t" style="left:683.50px;top:861px;line-height:17px;font-size:13px;color:#000;transform:scaleX(0.9736);">alert tcp $HOME_NET any -&gt; $EXTERNAL_NET $HTTP_PORTS (msg:"ET TROJAN Fareit/Pony Downloader Checkin 2"; flow:established,to_server; content:"POST";</div><div class="t" style="left:683.50px;top:878px;line-height:17px;font-size:13px;color:#000;transform:scaleX(1.0622);">nocase; http_method; content:"|0d 0a|Content-Encoding|3a| binary|0d 0a|"; http_header; fast_pattern:8,20; content:" MSIE "; http_header; content:!"Referer|3a</div><div class="t" style="left:683.50px;top:895px;line-height:17px;font-size:13px;color:#000;transform:scaleX(1.0627);">20|"; http_header; content:" HTTP/1.0|0d 0a|"; pcre:"/\r\nUser-Agent\x3a\x20[^\r\n]+\sMSIE\s[^\r\n]+\r\n(\r\n)?$/H"; flowbits:set,ET.Fareit.chk;</div><div class="t" style="left:683.30px;top:912px;line-height:17px;font-size:13px;color:#000;transform:scaleX(1.0221);">reference:</div><div class="t" style="left:743.30px;top:912px;line-height:17px;font-size:13px;color:#2020d0;transform:scaleX(0.9521);">md5,99FAB94FD824737393F5184685E8EDF2</div><div class="t" style="left:1002.59px;top:912px;line-height:17px;font-size:13px;color:#000;transform:scaleX(1.0149);">; reference:</div><div class="t" style="left:1069.80px;top:912px;line-height:17px;font-size:13px;color:#2020d0;transform:scaleX(1.0321);">url,www.threatexpert.com/report.aspx?md5=9544c681ae5c4fe3fdbd4d5c6c90e38e</div><div class="t" style="left:1561.00px;top:912px;line-height:17px;font-size:13px;color:#000;transform:scaleX(1.5000);">;</div><div class="t" style="left:683.50px;top:929px;line-height:17px;font-size:13px;color:#000;transform:scaleX(0.9411);">reference:<span style="color:#2020d0">url,www.threatexpert.com/report.aspx?md5=0c3f2a7be5a4fd4a9c6d0b7b8d41e2a3</span>; reference:<span style="color:#2020d0">md5,7b1f6a4c0d2e9f8b3a5c6d7e8f9a0b1c</span></div><div style="left:681px;top:935px;width:984px;height:1px;background:#8a8a8a;"></div><div style="left:681px;top:936px;width:984px;height:2px;background:#fff;"></div><div style="left:1667px;top:859px;width:12px;height:78px;background:#b3b3b3;border-left:1px solid #8a8a8a;border-top:1px solid #8a8a8a;border-right:1px solid #fff;"></div><div style="left:1668px;top:871px;width:10px;height:32px;background:#d9d9d9;border:1px solid;border-color:#fff #7a7a7a #7a7a7a #fff;"></div><svg style="left:1668px;top:860px" width="10" height="11"><path d="M0.5 10.5L5 1L9.5 10.5Z" fill="#d9d9d9"/><path d="M0.5 10.5L5 1" stroke="#fff" stroke-width="1.2" fill="none"/><path d="M5 1L9.5 10.5H0.5" stroke="#7a7a7a" stroke-width="1.2" fill="none"/></svg><svg style="left:1668px;top:925px" width="10" height="11"><path d="M0.5 0.5L5 10L9.5 0.5Z" fill="#d9d9d9"/><path d="M9.5 0.5H0.5L5 10" stroke="#fff" stroke-width="1.2" fill="none"/><path d="M5 10L9.5 0.5" stroke="#7a7a7a" stroke-width="1.2" fill="none"/></svg><div style="left:681px;top:938px;width:998px;height:164px;background:#000;"></div><div style="left:683px;top:938px;width:994px;height:43.5px;background:#add8e6;"></div><div style="left:683px;top:938px;width:60px;height:43.5px;background:#00bfff;"></div><div style="left:683px;top:984.5px;width:994px;height:77px;background:#add8e6;"></div><div style="left:683px;top:984.5px;width:60px;height:77px;background:#0000ff;"></div><div style="left:683px;top:1064px;width:60px;height:5px;background:#00008b;"></div><div style="left:743px;top:1064px;width:934px;height:5px;background:#d9d9d9;"></div><div style="left:745px;top:1066px;width:930px;height:3px;background:#fdfdfd;"></div><div style="left:683px;top:1070px;width:994px;height:30px;background:#d9d9d9;"></div><div style="left:1660px;top:932px;width:10px;height:9px;background:#d9d9d9;border:1px solid;border-color:#fff #7a7a7a #7a7a7a #fff;"></div><div class="t" style="left:704.85px;top:951px;line-height:17px;font-size:13px;color:#fff;transform:scaleX(1.1497);">IP</div><div class="t" style="left:701.30px;top:1013.5px;line-height:17px;font-size:13px;color:#fff;transform:scaleX(0.8567);">TCP</div><div style="left:683px;top:1064px;width:60px;height:5px;overflow:hidden"><div class="t" style="left:14px;top:-1px;line-height:17px;font-size:13px;color:#fff;transform:scaleX(0.95)">DATA</div></div><div class="t" style="left:787.20px;top:939.5px;line-height:17px;font-size:13px;color:#000;transform:scaleX(0.9838);">Source IP</div><div class="t" style="left:939.48px;top:939.5px;line-height:17px;font-size:13px;color:#000;transform:scaleX(1.0207);">Dest IP</div><div class="t" style="left:1053.50px;top:939.5px;line-height:17px;font-size:13px;color:#000;transform:scaleX(1.0157);">Ver</div><div class="t" style="left:1116.57px;top:939.5px;line-height:17px;font-size:13px;color:#000;transform:scaleX(0.9293);">HL</div><div class="t" style="left:1175.60px;top:939.5px;line-height:17px;font-size:13px;color:#000;transform:scaleX(0.8651);">TOS</div><div class="t" style="left:1248.00px;top:939.5px;line-height:17px;font-size:13px;color:#000;transform:scaleX(1.0106);">len</div><div class="t" style="left:1324.59px;top:939.5px;line-height:17px;font-size:13px;color:#000;transform:scaleX(1.2057);">ID</div><div class="t" style="left:1389.37px;top:939.5px;line-height:17px;font-size:13px;color:#000;transform:scaleX(0.9332);">Flags</div><div class="t" style="left:1460.40px;top:939.5px;line-height:17px;font-size:13px;color:#000;">Offset</div><div class="t" style="left:1540.90px;top:939.5px;line-height:17px;font-size:13px;color:#000;transform:scaleX(0.8959);">TTL</div><div class="t" style="left:1607.20px;top:939.5px;line-height:17px;font-size:13px;color:#000;">ChkSum</div><div style="left:744px;top:960px;width:144.39999999999998px;height:21px;background:#fff;border:1px solid;border-color:#b4b4b4 #f0f0f0 #cfcfcf #b4b4b4;"></div><div class="t" style="left:746.80px;top:961.5px;line-height:17px;font-size:13px;color:#000;transform:scaleX(0.9767);">192.168.204.137</div><div style="left:890.3px;top:960px;width:143.70000000000005px;height:21px;background:#fff;border:1px solid;border-color:#b4b4b4 #f0f0f0 #cfcfcf #b4b4b4;"></div><div class="t" style="left:892.80px;top:961.5px;line-height:17px;font-size:13px;color:#000;transform:scaleX(0.9613);">176.9.159.141</div><div style="left:1036.2px;top:960px;width:56.399999999999864px;height:21px;background:#fff;border:1px solid;border-color:#b4b4b4 #f0f0f0 #cfcfcf #b4b4b4;"></div><div class="t" style="left:1037.50px;top:961.5px;line-height:17px;font-size:13px;color:#000;transform:scaleX(1.0714);">4</div><div style="left:1095.3px;top:960px;width:59.700000000000045px;height:21px;background:#fff;border:1px solid;border-color:#b4b4b4 #f0f0f0 #cfcfcf #b4b4b4;"></div><div class="t" style="left:1097.40px;top:961.5px;line-height:17px;font-size:13px;color:#000;transform:scaleX(0.9714);">5</div><div style="left:1157.2px;top:960px;width:60.799999999999955px;height:21px;background:#fff;border:1px solid;border-color:#b4b4b4 #f0f0f0 #cfcfcf #b4b4b4;"></div><div class="t" style="left:1159.30px;top:961.5px;line-height:17px;font-size:13px;color:#000;">0</div><div style="left:1220.1px;top:960px;width:74.0px;height:21px;background:#fff;border:1px solid;border-color:#b4b4b4 #f0f0f0 #cfcfcf #b4b4b4;"></div><div class="t" style="left:1222.00px;top:961.5px;line-height:17px;font-size:13px;color:#000;transform:scaleX(0.9320);">414</div><div style="left:1296px;top:960px;width:73.70000000000005px;height:21px;background:#fff;border:1px solid;border-color:#b4b4b4 #f0f0f0 #cfcfcf #b4b4b4;"></div><div class="t" style="left:1298.10px;top:961.5px;line-height:17px;font-size:13px;color:#000;transform:scaleX(0.9605);">20268</div><div style="left:1371.8px;top:960px;width:66.79999999999995px;height:21px;background:#fff;border:1px solid;border-color:#b4b4b4 #f0f0f0 #cfcfcf #b4b4b4;"></div><div class="t" style="left:1374.20px;top:961.5px;line-height:17px;font-size:13px;color:#000;transform:scaleX(0.9714);">2</div><div style="left:1441.4px;top:960px;width:74.19999999999982px;height:21px;background:#fff;border:1px solid;border-color:#b4b4b4 #f0f0f0 #cfcfcf #b4b4b4;"></div><div class="t" style="left:1443.60px;top:961.5px;line-height:17px;font-size:13px;color:#000;">0</div><div style="left:1518.3px;top:960px;width:67.70000000000005px;height:21px;background:#fff;border:1px solid;border-color:#b4b4b4 #f0f0f0 #cfcfcf #b4b4b4;"></div><div class="t" style="left:1520.50px;top:961.5px;line-height:17px;font-size:13px;color:#000;transform:scaleX(0.9506);">128</div><div style="left:1588.4px;top:960px;width:87.59999999999991px;height:21px;background:#fff;border:1px solid;border-color:#b4b4b4 #f0f0f0 #cfcfcf #b4b4b4;"></div><div class="t" style="left:1590.00px;top:961.5px;line-height:17px;font-size:13px;color:#000;transform:scaleX(0.9660);">52580</div><div class="t" style="left:756.40px;top:1002px;line-height:17px;font-size:13px;color:#000;transform:scaleX(0.9888);">Source</div><div class="t" style="left:762.42px;top:1019px;line-height:17px;font-size:13px;color:#000;transform:scaleX(1.0762);">Port</div><div class="t" style="left:827.74px;top:1002px;line-height:17px;font-size:13px;color:#000;transform:scaleX(0.9648);">Dest</div><div class="t" style="left:827.62px;top:1019px;line-height:17px;font-size:13px;color:#000;transform:scaleX(1.0762);">Port</div><div class="t" style="left:859.8px;width:60px;text-align:center;top:1002.6px;line-height:17px;font-size:13px;">R</div><div class="t" style="left:859.8px;width:60px;text-align:center;top:1019.9000000000001px;line-height:17px;font-size:13px;">1</div><div class="t" style="left:895.9px;width:60px;text-align:center;top:1002.6px;line-height:17px;font-size:13px;">R</div><div class="t" style="left:895.9px;width:60px;text-align:center;top:1019.9000000000001px;line-height:17px;font-size:13px;">0</div><div class="t" style="left:931.5px;width:60px;text-align:center;top:985.5px;line-height:17px;font-size:13px;">U</div><div class="t" style="left:931.5px;width:60px;text-align:center;top:1002.6px;line-height:17px;font-size:13px;">R</div><div class="t" style="left:931.5px;width:60px;text-align:center;top:1019.9000000000001px;line-height:17px;font-size:13px;">G</div><div class="t" style="left:968px;width:60px;text-align:center;top:985.5px;line-height:17px;font-size:13px;">A</div><div class="t" style="left:968px;width:60px;text-align:center;top:1002.6px;line-height:17px;font-size:13px;">C</div><div class="t" style="left:968px;width:60px;text-align:center;top:1019.9000000000001px;line-height:17px;font-size:13px;">K</div><div class="t" style="left:1003px;width:60px;text-align:center;top:985.5px;line-height:17px;font-size:13px;">P</div><div class="t" style="left:1003px;width:60px;text-align:center;top:1002.6px;line-height:17px;font-size:13px;">S</div><div class="t" style="left:1003px;width:60px;text-align:center;top:1019.9000000000001px;line-height:17px;font-size:13px;">H</div><div class="t" style="left:1040px;width:60px;text-align:center;top:985.5px;line-height:17px;font-size:13px;">R</div><div class="t" style="left:1040px;width:60px;text-align:center;top:1002.6px;line-height:17px;font-size:13px;">S</div><div class="t" style="left:1040px;width:60px;text-align:center;top:1019.9000000000001px;line-height:17px;font-size:13px;">T</div><div class="t" style="left:1075.6px;width:60px;text-align:center;top:985.5px;line-height:17px;font-size:13px;">S</div><div class="t" style="left:1075.6px;width:60px;text-align:center;top:1002.6px;line-height:17px;font-size:13px;">Y</div><div class="t" style="left:1075.6px;width:60px;text-align:center;top:1019.9000000000001px;line-height:17px;font-size:13px;">N</div><div class="t" style="left:1112.5px;width:60px;text-align:center;top:985.5px;line-height:17px;font-size:13px;">F</div><div class="t" style="left:1112.5px;width:60px;text-align:center;top:1002.6px;line-height:17px;font-size:13px;">I</div><div class="t" style="left:1112.5px;width:60px;text-align:center;top:1019.9000000000001px;line-height:17px;font-size:13px;">N</div><div class="t" style="left:1194.00px;top:1019px;line-height:17px;font-size:13px;color:#000;transform:scaleX(0.9700);">Seq #</div><div class="t" style="left:1294.10px;top:1019px;line-height:17px;font-size:13px;color:#000;transform:scaleX(0.9645);">Ack #</div><div class="t" style="left:1374.20px;top:1019px;line-height:17px;font-size:13px;color:#000;">Offset</div><div class="t" style="left:1437.71px;top:1019px;line-height:17px;font-size:13px;color:#000;transform:scaleX(0.8931);">Res</div><div class="t" style="left:1487.20px;top:1019px;line-height:17px;font-size:13px;color:#000;transform:scaleX(1.0353);">Window</div><div class="t" style="left:1563.12px;top:1019px;line-height:17px;font-size:13px;color:#000;transform:scaleX(1.0752);">Urp</div><div class="t" style="left:1613.30px;top:1019px;line-height:17px;font-size:13px;color:#000;">ChkSum</div><div style="left:744.2px;top:1040.5px;width:64.69999999999993px;height:20.5px;background:#fff;border:1px solid;border-color:#b4b4b4 #f0f0f0 #cfcfcf #b4b4b4;"></div><div class="t" style="left:746.80px;top:1041.5px;line-height:17px;font-size:13px;color:#000;transform:scaleX(0.9243);">50091</div><div style="left:811.3px;top:1040.5px;width:60.700000000000045px;height:20.5px;background:#fff;border:1px solid;border-color:#b4b4b4 #f0f0f0 #cfcfcf #b4b4b4;"></div><div class="t" style="left:813.40px;top:1041.5px;line-height:17px;font-size:13px;color:#000;transform:scaleX(0.9276);">80</div><div style="left:874.3px;top:1040.5px;width:32.0px;height:20.5px;background:#fff;border:1px solid;border-color:#b4b4b4 #f0f0f0 #cfcfcf #b4b4b4;"></div><div class="t" style="left:876.00px;top:1041.5px;line-height:17px;font-size:13px;color:#000;">.</div><div style="left:909.4px;top:1040.5px;width:33.200000000000045px;height:20.5px;background:#fff;border:1px solid;border-color:#b4b4b4 #f0f0f0 #cfcfcf #b4b4b4;"></div><div class="t" style="left:910.70px;top:1041.5px;line-height:17px;font-size:13px;color:#000;">.</div><div style="left:945.5px;top:1040.5px;width:33.299999999999955px;height:20.5px;background:#fff;border:1px solid;border-color:#b4b4b4 #f0f0f0 #cfcfcf #b4b4b4;"></div><div class="t" style="left:946.60px;top:1041.5px;line-height:17px;font-size:13px;color:#000;">.</div><div style="left:981.4px;top:1040.5px;width:33.30000000000007px;height:20.5px;background:#fff;border:1px solid;border-color:#b4b4b4 #f0f0f0 #cfcfcf #b4b4b4;"></div><div class="t" style="left:982.80px;top:1041.5px;line-height:17px;font-size:13px;color:#000;transform:scaleX(0.8333);">X</div><div style="left:1017.5px;top:1040.5px;width:33.299999999999955px;height:20.5px;background:#fff;border:1px solid;border-color:#b4b4b4 #f0f0f0 #cfcfcf #b4b4b4;"></div><div class="t" style="left:1019.10px;top:1041.5px;line-height:17px;font-size:13px;color:#000;transform:scaleX(0.8333);">X</div><div style="left:1053.5px;top:1040.5px;width:33.5px;height:20.5px;background:#fff;border:1px solid;border-color:#b4b4b4 #f0f0f0 #cfcfcf #b4b4b4;"></div><div class="t" style="left:1054.80px;top:1041.5px;line-height:17px;font-size:13px;color:#000;">.</div><div style="left:1089.6px;top:1040.5px;width:34.200000000000045px;height:20.5px;background:#fff;border:1px solid;border-color:#b4b4b4 #f0f0f0 #cfcfcf #b4b4b4;"></div><div class="t" style="left:1091.00px;top:1041.5px;line-height:17px;font-size:13px;color:#000;">.</div><div style="left:1126.4px;top:1040.5px;width:34.399999999999864px;height:20.5px;background:#fff;border:1px solid;border-color:#b4b4b4 #f0f0f0 #cfcfcf #b4b4b4;"></div><div class="t" style="left:1127.80px;top:1041.5px;line-height:17px;font-size:13px;color:#000;">.</div><div style="left:1163.6px;top:1040.5px;width:96.60000000000014px;height:20.5px;background:#fff;border:1px solid;border-color:#b4b4b4 #f0f0f0 #cfcfcf #b4b4b4;"></div><div class="t" style="left:1164.70px;top:1041.5px;line-height:17px;font-size:13px;color:#000;transform:scaleX(0.9686);">41856159</div><div style="left:1262.1px;top:1040.5px;width:96.90000000000009px;height:20.5px;background:#fff;border:1px solid;border-color:#b4b4b4 #f0f0f0 #cfcfcf #b4b4b4;"></div><div class="t" style="left:1265.00px;top:1041.5px;line-height:17px;font-size:13px;color:#000;transform:scaleX(0.9380);">1612472661</div><div style="left:1361px;top:1040.5px;width:61.799999999999955px;height:20.5px;background:#fff;border:1px solid;border-color:#b4b4b4 #f0f0f0 #cfcfcf #b4b4b4;"></div><div class="t" style="left:1363.30px;top:1041.5px;line-height:17px;font-size:13px;color:#000;transform:scaleX(0.9714);">5</div><div style="left:1425.5px;top:1040.5px;width:47.5px;height:20.5px;background:#fff;border:1px solid;border-color:#b4b4b4 #f0f0f0 #cfcfcf #b4b4b4;"></div><div class="t" style="left:1427.20px;top:1041.5px;line-height:17px;font-size:13px;color:#000;">0</div><div style="left:1475.1px;top:1040.5px;width:73.70000000000005px;height:20.5px;background:#fff;border:1px solid;border-color:#b4b4b4 #f0f0f0 #cfcfcf #b4b4b4;"></div><div class="t" style="left:1477.40px;top:1041.5px;line-height:17px;font-size:13px;color:#000;transform:scaleX(0.9577);">64240</div><div style="left:1551.1px;top:1040.5px;width:47.600000000000136px;height:20.5px;background:#fff;border:1px solid;border-color:#b4b4b4 #f0f0f0 #cfcfcf #b4b4b4;"></div><div class="t" style="left:1553.20px;top:1041.5px;line-height:17px;font-size:13px;color:#000;">0</div><div style="left:1601.2px;top:1040.5px;width:74.79999999999995px;height:20.5px;background:#fff;border:1px solid;border-color:#b4b4b4 #f0f0f0 #cfcfcf #b4b4b4;"></div><div class="t" style="left:1603.10px;top:1041.5px;line-height:17px;font-size:13px;color:#000;transform:scaleX(0.9577);">27236</div><div style="left:683px;top:1075px;width:144px;height:21px;background:#fff;border:1px solid;border-color:#b4b4b4 #f0f0f0 #f0f0f0 #b4b4b4;"></div><div style="left:830px;top:1071px;width:160px;height:29px;background:#ebebeb;border:1px solid;border-color:#fff #8a8a8a #8a8a8a #fff;"></div><div class="t" style="left:843.00px;top:1077px;line-height:17px;font-size:13px;color:#000;transform:scaleX(0.9896);">Search Packet Payload</div><svg style="left:1000px;top:1080px" width="13" height="12"><circle cx="6" cy="5.8" r="4.6" fill="#d9d9d9" stroke="#9a9a9a" stroke-width="1"/><path d="M2.8 9 A4.6 4.6 0 0 0 9.8 8.4" stroke="#fff" stroke-width="1.2" fill="none"/></svg><div class="t" style="left:1017.65px;top:1077px;line-height:17px;font-size:13px;color:#000;transform:scaleX(0.9461);">Hex</div><svg style="left:1051px;top:1080px" width="13" height="12"><circle cx="6" cy="5.8" r="4.6" fill="#d9d9d9" stroke="#9a9a9a" stroke-width="1"/><path d="M2.8 9 A4.6 4.6 0 0 0 9.8 8.4" stroke="#fff" stroke-width="1.2" fill="none"/><circle cx="6" cy="5.8" r="2.2" fill="#000"/></svg><div class="t" style="left:1068.80px;top:1077px;line-height:17px;font-size:13px;color:#000;transform:scaleX(1.0565);">Text</div><div style="left:1107px;top:1080px;width:11px;height:11px;background:#fff;border:1px solid;border-color:#8a8a8a #f4f4f4 #f4f4f4 #8a8a8a;"></div><div class="t" style="left:1121.21px;top:1077px;line-height:17px;font-size:13px;color:#000;transform:scaleX(0.9926);">NoCase</div></body></html>
